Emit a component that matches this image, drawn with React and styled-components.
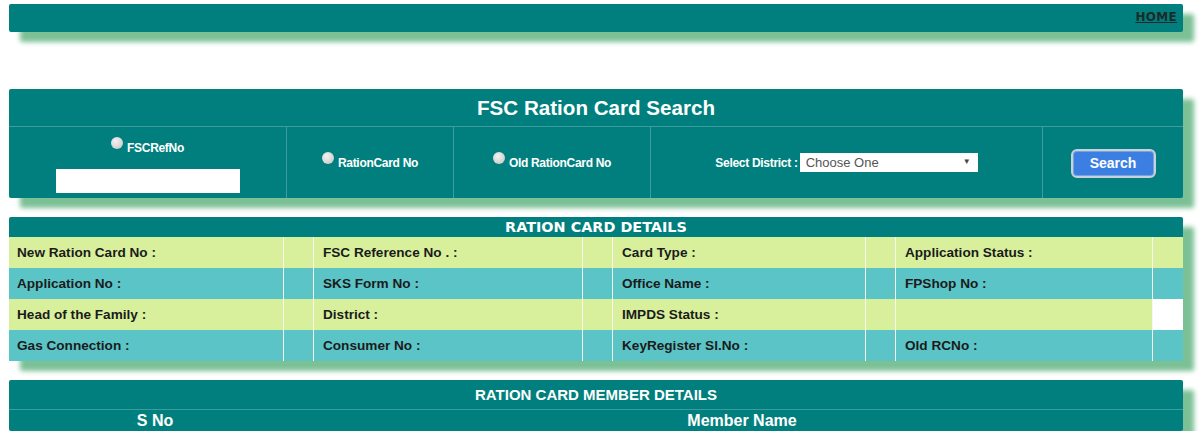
import React from "react";
import styled, { createGlobalStyle } from "styled-components";

const GlobalStyle = createGlobalStyle`
  body {
    margin: 0;
    background: #fff;
    font-family: "Liberation Sans", Arial, sans-serif;
  }
`;

const detailRows = [
  ["New Ration Card No :", "FSC Reference No . :", "Card Type :", "Application Status :"],
  ["Application No :", "SKS Form No :", "Office Name :", "FPShop No :"],
  ["Head of the Family :", "District :", "IMPDS Status :", ""],
  ["Gas Connection :", "Consumer No :", "KeyRegister Sl.No :", "Old RCNo :"],
];

const App = () => {
  return (
    <>
      <GlobalStyle />
      <Page>
        <TopBar>
          <HomeLink href="#">HOME</HomeLink>
        </TopBar>

        <Panel>
          <SearchTitle>FSC Ration Card Search</SearchTitle>
          <SearchRow>
            <SearchCell $stack>
              <RadioLabel>
                <Radio type="radio" name="mode" />
                FSCRefNo
              </RadioLabel>
              <TextInput type="text" />
            </SearchCell>
            <SearchCell>
              <RadioLabel>
                <Radio type="radio" name="mode" />
                RationCard No
              </RadioLabel>
            </SearchCell>
            <SearchCell>
              <RadioLabel>
                <Radio type="radio" name="mode" />
                Old RationCard No
              </RadioLabel>
            </SearchCell>
            <SearchCell>
              <DistrictLabel>Select District :</DistrictLabel>
              <SelectWrap>
                <Select defaultValue="">
                  <option value="">Choose One</option>
                </Select>
                <Arrow>▼</Arrow>
              </SelectWrap>
            </SearchCell>
            <SearchCell>
              <SearchButton type="button">Search</SearchButton>
            </SearchCell>
          </SearchRow>
        </Panel>

        <Panel>
          <DetailsTitle>RATION CARD DETAILS</DetailsTitle>
          <DetailsGrid>
            {detailRows.map((row, i) =>
              row.map((label, j) => (
                <React.Fragment key={`${i}-${j}`}>
                  <DetailCell $alt={i % 2 === 1} $first={j === 0}>
                    {label}
                  </DetailCell>
                  <DetailCell $alt={i % 2 === 1} $blank={i === 2 && j === 3} />
                </React.Fragment>
              ))
            )}
          </DetailsGrid>
        </Panel>

        <Panel>
          <MemberTitle>RATION CARD MEMBER DETAILS</MemberTitle>
          <MemberHead>
            <MemberCol>S No</MemberCol>
            <MemberCol>Member Name</MemberCol>
          </MemberHead>
        </Panel>
      </Page>
    </>
  );
};

export default App;

const Page = styled.div`
  display: flex;
  flex-direction: column;
  gap: 19px;
  width: 1174px;
  padding: 4px 0 0 9px;
`;

const TopBar = styled.div`
  display: flex;
  justify-content: flex-end;
  align-items: center;
  height: 28px;
  padding-right: 6px;
  background: #017f7e;
  border-radius: 2px;
  box-shadow: 11px 10px 5px #7cc096;
  margin-bottom: 38px;
`;

const HomeLink = styled.a`
  font-family: "DejaVu Sans", Tahoma, sans-serif;
  font-size: 12px;
  font-weight: bold;
  color: #1c2a2a;
  text-decoration: underline;
  letter-spacing: 0.3px;
  margin-top: -3px;
`;

const Panel = styled.div`
  background: #017f7e;
  border-radius: 2px;
  box-shadow: 11px 10px 5px #7cc096;
`;

const SearchTitle = styled.div`
  height: 37px;
  line-height: 37px;
  text-align: center;
  color: #fff;
  font-size: 20.6px;
  font-weight: bold;
  border-bottom: 1px solid #3d9d9c;
`;

const SearchRow = styled.div`
  display: grid;
  grid-template-columns: 277px 167px 197px 392px 1fr;
  height: 71px;
`;

const SearchCell = styled.div`
  display: flex;
  flex-direction: ${(p) => (p.$stack ? "column" : "row")};
  align-items: center;
  justify-content: center;
  gap: ${(p) => (p.$stack ? "14px" : "2px")};
  padding-top: ${(p) => (p.$stack ? "9px" : "0")};
  border-left: 1px solid #3d9d9c;

  &:first-child {
    border-left: none;
  }
`;

const RadioLabel = styled.label`
  display: flex;
  align-items: flex-start;
  gap: 4px;
  color: #fff;
  font-family: "Liberation Sans Narrow", "Liberation Sans", Arial, sans-serif;
  font-size: 12px;
  font-weight: bold;
  line-height: 14px;
  letter-spacing: -0.3px;
`;

const Radio = styled.input`
  appearance: none;
  width: 12px;
  height: 12px;
  margin: -4px 0 0 0;
  border-radius: 50%;
  background: radial-gradient(circle at 40% 35%, #f2f2f2 0%, #d6d6d6 60%, #b9b9b9 100%);
  border: none;
`;

const TextInput = styled.input`
  width: 184px;
  height: 24px;
  box-sizing: border-box;
  border: none;
  background: #fff;
  padding: 0 4px;
`;

const DistrictLabel = styled.span`
  color: #fff;
  font-family: "Liberation Sans Narrow", "Liberation Sans", Arial, sans-serif;
  font-size: 12px;
  font-weight: bold;
  letter-spacing: -0.3px;
`;

const SelectWrap = styled.div`
  position: relative;
  width: 178px;
  height: 19px;
`;

const Select = styled.select`
  appearance: none;
  width: 100%;
  height: 100%;
  border: none;
  border-radius: 0;
  background: #fff;
  padding: 0 0 0 6px;
  color: #555;
  font-family: "Liberation Sans", Arial, sans-serif;
  font-size: 13px;
`;

const Arrow = styled.span`
  position: absolute;
  right: 7px;
  top: 4px;
  font-size: 8px;
  color: #444;
  pointer-events: none;
`;

const SearchButton = styled.button`
  width: 85px;
  height: 29px;
  margin-top: 1px;
  background: #3c7fe3;
  color: #fff;
  font-family: "Liberation Sans", Arial, sans-serif;
  font-size: 14px;
  font-weight: bold;
  border: 2px solid #c9d2dc;
  border-radius: 6px;
  box-shadow: inset 0 0 0 1px #7aa3d8;
`;

const DetailsTitle = styled.div`
  height: 20px;
  line-height: 21px;
  text-align: center;
  color: #fff;
  font-family: "DejaVu Sans", Tahoma, sans-serif;
  font-size: 14.4px;
  font-weight: bold;
`;

const DetailsGrid = styled.div`
  display: grid;
  grid-template-columns: 274px 30px 269px 30px 253px 30px 257px 1fr;
  grid-auto-rows: 31px;
`;

const DetailCell = styled.div`
  display: flex;
  align-items: center;
  padding-left: ${(p) => (p.$first ? "8px" : "9px")};
  background: ${(p) => (p.$blank ? "#fff" : p.$alt ? "#5ac4c6" : "#d8f09b")};
  border-left: ${(p) => (p.$first ? "none" : "1px solid #f4f8ee")};
  color: #1b1b1b;
  font-size: 13.6px;
  font-weight: bold;
  white-space: nowrap;
`;

const MemberTitle = styled.div`
  height: 29px;
  line-height: 30px;
  text-align: center;
  color: #fff;
  font-size: 15px;
  font-weight: bold;
  border-bottom: 1px solid #3d9d9c;
`;

const MemberHead = styled.div`
  display: grid;
  grid-template-columns: 292px 1fr;
  height: 21px;
`;

const MemberCol = styled.div`
  text-align: center;
  line-height: 21px;
  color: #fff;
  font-size: 16px;
  font-weight: bold;
`;
